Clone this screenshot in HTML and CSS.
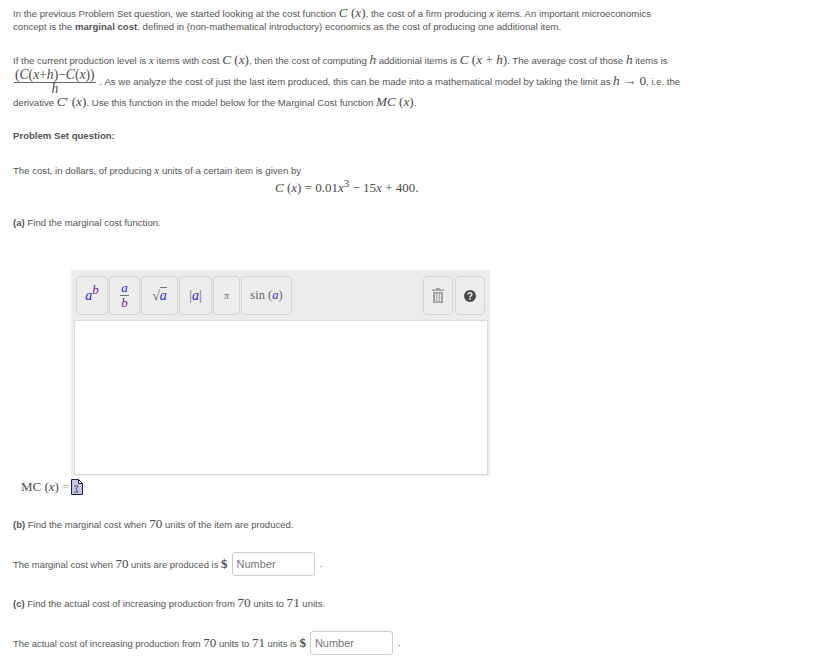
FILE: index.html
```html
<!DOCTYPE html>
<html>
<head>
    <meta charset="UTF-8">
    <title>Marginal cost</title>
    <link rel="stylesheet" href="styles.css">
</head>
<body>
    <p class="line intro-1">In the previous Problem Set question, we started looking at the cost function <span class="m big"><i>C</i> (<i>x</i>)</span>, the cost of a firm producing <span class="m"><i>x</i></span> items. An important microeconomics</p>
    <p class="line">concept is the <b>marginal cost</b>, defined in (non-mathematical introductory) economics as the cost of producing one additional item.</p>

    <p class="line intro-2">If the current production level is <span class="m"><i>x</i></span> items with cost <span class="m big"><i>C</i> (<i>x</i>)</span>, then the cost of computing <span class="m big"><i>h</i></span> additionial items is <span class="m big"><i>C</i> (<i>x</i> + <i>h</i>)</span>. The average cost of those <span class="m big"><i>h</i></span> items is</p>
    <div class="line frac-line">
        <span class="frac m big"><span class="num">(<i>C</i>(<i>x</i>+<i>h</i>)&minus;<i>C</i>(<i>x</i>))</span><span class="den"><i>h</i></span></span>
        <span>. As we analyze the cost of just the last item produced, this can be made into a mathematical model by taking the limit as <span class="m big"><i>h</i> &rarr; 0</span>, i.e. the</span>
    </div>
    <p class="line deriv">derivative <span class="m big"><i>C</i>&prime; (<i>x</i>)</span>. Use this function in the model below for the Marginal Cost function <span class="m big"><i>MC</i> (<i>x</i>)</span>.</p>

    <p class="line heading"><b>Problem Set question:</b></p>

    <p class="line cost-intro">The cost, in dollars, of producing <span class="m"><i>x</i></span> units of a certain item is given by</p>
    <p class="line formula"><span class="m formula-math"><i>C</i> (<i>x</i>) = 0.01<i>x</i><sup>3</sup> &minus; 15<i>x</i> + 400.</span></p>

    <p class="line part-a"><b>(a)</b> Find the marginal cost function.</p>

    <div class="editor">
        <div class="toolbar">
            <button class="tool w32"><span class="sym large"><i class="blue">a</i><sup class="purple"><i>b</i></sup></span></button>
            <button class="tool w31"><span class="sym stack"><i class="blue">a</i><i class="purple over">b</i></span></button>
            <button class="tool w37"><span class="sym large">&radic;<i class="blue over-top">a</i></span></button>
            <button class="tool w33"><span class="sym large">|<i class="blue">a</i>|</span></button>
            <button class="tool w27"><span class="sym small"><i>&pi;</i></span></button>
            <button class="tool w51"><span class="sym">sin (<i class="blue">a</i>)</span></button>
            <span class="spacer"></span>
            <button class="tool w30" aria-label="Clear">
                <svg width="12" height="15" viewBox="0 0 12 15"><path fill="#a0a0a0" d="M4 0h4v1.500h4v1.600H0V1.500h4zM1 4h10v11H1zM3 5.500v8h1.300v-8zM5.350 5.500v8h1.300v-8zM7.700 5.500v8H9v-8z"/></svg>
            </button>
            <button class="tool w30 help" aria-label="Help">
                <svg width="12" height="12" viewBox="0 0 12 12"><circle cx="6" cy="6" r="6" fill="#4a4a4a"/><path fill="none" stroke="#eee" stroke-width="1.500" d="M4.200 4.600c0-2.300 3.700-2.300 3.700-.1 0 1.400-1.900 1.300-1.900 2.900"/><rect x="5.200" y="8.300" width="1.600" height="1.600" fill="#eee"/></svg>
            </button>
        </div>
        <div class="editor-area"></div>
    </div>

    <div class="answer-row">
        <span class="m mc">MC (<i>x</i>) <span class="eq">=</span></span>
        <svg class="broken" width="12" height="16" viewBox="0 0 12 16"><path fill="#c4c4ee" stroke="#20204a" d="M.5.500h7l4 4v11H.5z"/><path fill="#fff" stroke="#20204a" d="M7.500.500v4h4z"/><path fill="none" stroke="#556" d="M3 7h4L5 10l2 3H3"/></svg>
    </div>

    <p class="line part-b"><b>(b)</b> Find the marginal cost when <span class="m big">70</span> units of the item are produced.</p>

    <div class="line input-row row-b">
        <span>The marginal cost when <span class="m big">70</span> units are produced is <b class="m big">$</b></span>
        <input class="number" type="text" placeholder="Number"><span class="dot">.</span>
    </div>

    <p class="line part-c"><b>(c)</b> Find the actual cost of increasing production from <span class="m big">70</span> units to <span class="m big">71</span> units.</p>

    <div class="line input-row row-c">
        <span>The actual cost of increasing production from <span class="m big">70</span> units to <span class="m big">71</span> units is <b class="m big">$</b></span>
        <input class="number" type="text" placeholder="Number"><span class="dot">.</span>
    </div>
</body>
</html>
```

FILE: styles.css
```css
body {
    margin: 0;
    padding: 6px 0 0 13px;
    font-family: "Liberation Sans", Arial, sans-serif;
    font-size: 9.6px;
    color: #555;
    background: #fff;
}

.line {
    margin: 0;
    height: 14px;
    line-height: 14px;
    white-space: nowrap;
}

.m {
    font-family: "Liberation Serif", "Times New Roman", serif;
    font-size: 11px;
    color: #4a4a4a;
}

.big {
    font-size: 13.2px;
}

.m sup {
    font-size: 11px;
    line-height: 0;
}

.intro-2 {
    margin-top: 19px;
}

.frac-line {
    display: flex;
    align-items: center;
    height: 28px;
    gap: 4px;
}

.frac {
    display: inline-flex;
    flex-direction: column;
    align-items: center;
    font-size: 13.6px;
    line-height: 14px;
    margin-left: 1px;
}

.num {
    padding: 0 1px;
    border-bottom: 1px solid #666;
}

.den {
    height: 12px;
    line-height: 12px;
}

.heading {
    margin-top: 20px;
}

.cost-intro {
    margin-top: 20px;
}

.formula {
    margin-top: 4px;
    padding-left: 262px;
}

.formula-math {
    font-size: 13px;
}

.part-a {
    margin-top: 21px;
}

.editor {
    margin: 40px 0 0 58px;
    width: 419px;
    height: 206px;
    box-sizing: border-box;
    padding: 6px 2px 0 3px;
    background: #ececec;
}

.toolbar {
    display: flex;
    height: 39px;
    padding-left: 2px;
    padding-right: 3px;
    gap: 1px;
}

.tool {
    display: flex;
    align-items: center;
    justify-content: center;
    height: 39px;
    padding: 0;
    box-sizing: border-box;
    background: #ededed;
    border: 1px solid #d4d4d4;
    border-radius: 4px;
}

.help {
    margin-left: 1px;
}

.w32 { width: 32px; }
.w31 { width: 31px; }
.w37 { width: 37px; }
.w33 { width: 33px; }
.w27 { width: 27px; }
.w51 { width: 51px; }
.w30 { width: 30px; }

.spacer {
    flex: 1;
}

.sym {
    font-family: "Liberation Serif", "Times New Roman", serif;
    font-size: 12.5px;
    color: #666;
}

.sym.large {
    font-size: 14px;
}

.sym.small {
    font-size: 10px;
}

.sym sup {
    font-size: 13px;
    line-height: 0;
}

.blue {
    color: #2a2ae0;
}

.purple {
    color: #7a1f8f;
}

.stack {
    display: inline-flex;
    flex-direction: column;
    align-items: center;
    font-size: 13px;
    line-height: 14px;
}

.over {
    border-top: 1px solid #777;
    padding: 0 1px;
}

.over-top {
    border-top: 1px solid #777;
}

.editor-area {
    margin-top: 5px;
    height: 155px;
    box-sizing: border-box;
    background: #fff;
    border: 1px solid #dcdcdc;
}

.answer-row {
    display: flex;
    align-items: center;
    height: 22px;
    padding-left: 8px;
}

.mc {
    width: 50px;
    font-size: 13px;
}

.eq {
    color: #aaa;
}

.part-b {
    margin-top: 19px;
    font-size: 9.5px;
}

.input-row {
    display: flex;
    align-items: center;
    gap: 4px;
    height: 24px;
    font-size: 9.42px;
}

.input-row .m {
    font-size: 13px;
}

.row-b {
    margin-top: 21px;
}

.part-c {
    margin-top: 20px;
    font-size: 9.5px;
}

.row-c {
    margin-top: 21px;
}

.number {
    width: 83px;
    height: 24px;
    box-sizing: border-box;
    margin: 0;
    padding: 0 4px;
    border: 1px solid #ccc;
    border-radius: 3px;
    font-family: "Liberation Sans", Arial, sans-serif;
    font-size: 11px;
    background: #fff;
}

.number::placeholder {
    color: #777;
    opacity: 1;
}

.dot {
    margin-left: 1px;
}
```
